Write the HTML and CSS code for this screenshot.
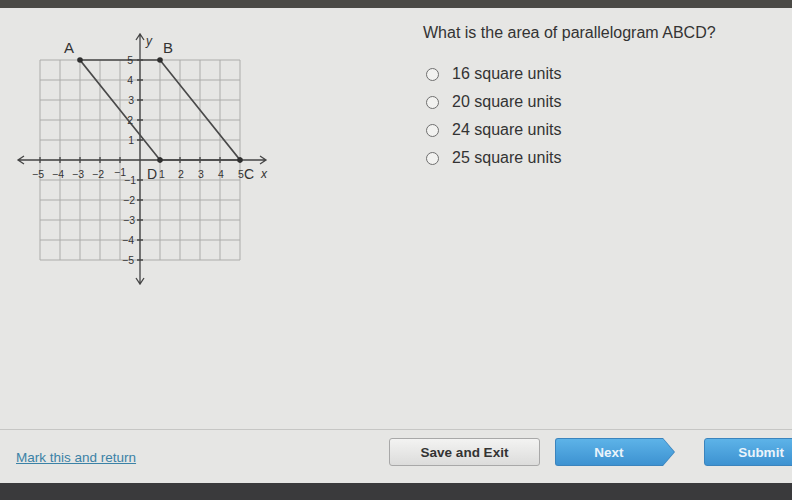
FILE: index.html
```html
<!DOCTYPE html>
<html lang="en">
<head>
  <meta charset="UTF-8" />
  <title>Parallelogram Area</title>
  <link rel="stylesheet" href="styles.css">
</head>
<body>
  <div class="topbar"></div>

  <main class="question-area">
    <div class="graph">
      <svg width="280" height="300" viewBox="0 8 280 300">
        <!-- grid -->
        <path class="grid" d="M40 60V260M60 60V260M80 60V260M100 60V260M120 60V260M140 60V260M160 60V260M180 60V260M200 60V260M220 60V260M240 60V260
          M40 60H240M40 80H240M40 100H240M40 120H240M40 140H240M40 160H240M40 180H240M40 200H240M40 220H240M40 240H240M40 260H240" />
        <!-- axes -->
        <path class="axis" d="M18 160H266M24 156L18 160L24 164M260 156L266 160L260 164
          M140 34V284M136 40L140 34L144 40M136 278L140 284L144 278" />
        <path class="axis" d="M40 157V163M60 157V163M80 157V163M100 157V163M120 157V163M160 157V163M180 157V163M200 157V163M220 157V163M240 157V163
          M137 60H143M137 80H143M137 100H143M137 120H143M137 140H143M137 180H143M137 200H143M137 220H143M137 240H143M137 260H143" />
        <!-- parallelogram -->
        <path class="shape" d="M80 60L160 60L240 160L160 160Z" />
        <circle class="pt" cx="80" cy="60" r="2.8" />
        <circle class="pt" cx="160" cy="60" r="2.8" />
        <circle class="pt" cx="240" cy="160" r="2.8" />
        <circle class="pt" cx="160" cy="160" r="2.8" />
        <!-- labels -->
        <text class="vertex" x="64" y="53">A</text>
        <text class="vertex" x="163" y="53">B</text>
        <text class="vertex small" x="147" y="179">D</text>
        <text class="vertex small" x="244" y="179">C</text>
        <text class="axis-name" x="146" y="45">y</text>
        <text class="axis-name" x="261" y="178">x</text>
        <g class="ticks-x">
          <text x="44" y="178">−5</text>
          <text x="64" y="178">−4</text>
          <text x="84" y="178">−3</text>
          <text x="104" y="178">−2</text>
          <text x="126" y="176">−1</text>
          <text class="pos" x="162" y="178">1</text>
          <text class="pos" x="181" y="178">2</text>
          <text class="pos" x="201" y="178">3</text>
          <text class="pos" x="221" y="178">4</text>
          <text class="pos" x="241" y="178">5</text>
        </g>
        <g class="ticks-y">
          <text x="133" y="64">5</text>
          <text x="133" y="84">4</text>
          <text x="134" y="104">3</text>
          <text x="133" y="124">2</text>
          <text x="134" y="144">1</text>
          <text x="136" y="184">−1</text>
          <text x="135" y="204">−2</text>
          <text x="135" y="224">−3</text>
          <text x="134" y="244">−4</text>
          <text x="134" y="264">−5</text>
        </g>
      </svg>
    </div>

    <div class="question">
      <p class="prompt">What is the area of parallelogram ABCD?</p>
      <ul class="choices">
        <li><span class="radio"></span>16 square units</li>
        <li><span class="radio"></span>20 square units</li>
        <li><span class="radio"></span>24 square units</li>
        <li><span class="radio"></span>25 square units</li>
      </ul>
    </div>
  </main>

  <footer class="footer">
    <a class="mark" href="#">Mark this and return</a>
    <button class="btn btn-save">Save and Exit</button>
    <button class="btn btn-next"><span>Next</span></button>
    <button class="btn btn-submit">Submit</button>
  </footer>

  <div class="bottombar"></div>
</body>
</html>
```

FILE: styles.css
```css
:root {
  --bg: #e6e6e4;
  --ink: #333;
  --line: #454545;
  --blue-top: #5db3e8;
  --blue-bottom: #3d92d1;
  --blue-edge: #3b84bd;
}

* {
  box-sizing: border-box;
}

body {
  margin: 0;
  background: var(--bg);
  font-family: 'Liberation Sans', Arial, sans-serif;
  color: var(--ink);
  overflow: hidden;
}

.topbar {
  height: 8px;
  background: #4b4a46;
}

.question-area {
  height: 421px;
  display: grid;
  grid-template-columns: 423px 1fr;
}

.graph svg {
  display: block;
}

.grid {
  fill: none;
  stroke: #acacaa;
  stroke-width: 1;
}

.axis {
  fill: none;
  stroke: var(--line);
  stroke-width: 1.3;
}

.shape {
  fill: none;
  stroke: #4a4a4a;
  stroke-width: 1.7;
}

.pt {
  fill: #2e2e2e;
}

.vertex {
  font-size: 15px;
  fill: #333;
}

.vertex.small {
  font-size: 14px;
}

.axis-name {
  font-size: 12px;
  font-style: italic;
  fill: #333;
}

.ticks-x text,
.ticks-y text {
  font-size: 10.5px;
  fill: #333;
  text-anchor: end;
}

.ticks-x text.pos {
  text-anchor: middle;
}

.question {
  padding-top: 15px;
}

.prompt {
  margin: 0;
  font-size: 16px;
  line-height: 20px;
}

.choices {
  list-style: none;
  margin: 17px 0 0;
  padding: 0;
}

.choices li {
  height: 28px;
  display: flex;
  align-items: center;
  padding-left: 3px;
  font-size: 16px;
}

.radio {
  width: 13px;
  height: 13px;
  border: 1.5px solid #6f6f6f;
  border-radius: 50%;
  background: #f2f2f0;
  margin-right: 13px;
}

.footer {
  height: 54px;
  border-top: 1px solid #c6c6c4;
  display: flex;
  align-items: flex-start;
  padding-left: 16px;
  overflow: hidden;
}

.mark {
  width: 373px;
  flex-shrink: 0;
  align-self: center;
  margin-top: 2px;
  font-size: 13.5px;
  color: #3b82a6;
}

.btn {
  flex-shrink: 0;
  height: 28px;
  margin-top: 8px;
  font-family: inherit;
  font-size: 13.5px;
  font-weight: bold;
  padding: 0;
  cursor: pointer;
}

.btn-save {
  width: 151px;
  background: linear-gradient(#f3f3f2, #dcdcdb);
  border: 1px solid #a8a8a8;
  border-radius: 3px;
  color: #333;
}

.btn-next {
  width: 120px;
  margin-left: 15px;
  display: flex;
  padding: 1px;
  border: none;
  background: var(--blue-edge);
  clip-path: polygon(0 0, 108px 0, 120px 50%, 108px 100%, 0 100%);
  border-radius: 3px 0 0 3px;
}

.btn-next span {
  flex: 1;
  display: flex;
  align-items: center;
  justify-content: center;
  padding-right: 12px;
  background: linear-gradient(var(--blue-top), var(--blue-bottom));
  clip-path: polygon(0 0, 107px 0, 118px 50%, 107px 100%, 0 100%);
  border-radius: 2px 0 0 2px;
  color: #eaf4fb;
}

.btn-submit {
  width: 114px;
  margin-left: 29px;
  background: linear-gradient(var(--blue-top), var(--blue-bottom));
  border: 1px solid var(--blue-edge);
  border-radius: 3px;
  color: #eaf4fb;
}

.bottombar {
  height: 17px;
  background: #3a3a3c;
}
```
